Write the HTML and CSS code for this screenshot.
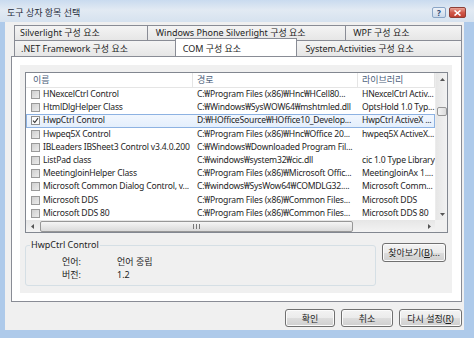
FILE: index.html
```html
<!DOCTYPE html>
<html>
<head>
    <title>도구 상자 항목 선택</title>
    <meta charset="utf-8">
    <link rel="stylesheet" href="styles.css">
</head>
<body>
<div class="window">
    <div class="titlebar">
        <span class="title">도구 상자 항목 선택</span>
        <div class="caption-btns">
            <span class="cap-btn help">?</span>
            <span class="cap-btn close">
                <svg width="7" height="6" viewBox="0 0 7 6"><path d="M0.5 0.5 L6.5 5.5 M6.5 0.5 L0.5 5.5" stroke="#fff" stroke-width="1.6"/></svg>
            </span>
        </div>
    </div>

    <div class="client">
        <div class="tab-row back">
            <div class="tab t-sl">Silverlight 구성 요소</div>
            <div class="tab t-wp">Windows Phone Silverlight 구성 요소</div>
            <div class="tab t-wpf">WPF 구성 요소</div>
        </div>
        <div class="tab-row front">
            <div class="tab t-net">.NET Framework 구성 요소</div>
            <div class="tab t-com active">COM 구성 요소</div>
            <div class="tab t-sys">System.Activities 구성 요소</div>
        </div>

        <div class="tab-page">
            <div class="page-inner">
                <div class="listview">
                    <div class="lv-main">
                        <div class="lv-content">
                            <div class="lv-header">
                                <div class="hcell first">이름</div>
                                <div class="hcell">경로</div>
                                <div class="hcell">라이브러리</div>
                            </div>
                            <div class="lv-row">
                                <div class="cell name"><span class="chk"></span>HNexcelCtrl Control</div>
                                <div class="cell">C:₩Program Files (x86)₩Hnc₩HCell80...</div>
                                <div class="cell">HNexcelCtrl Activ...</div>
                            </div>
                            <div class="lv-row">
                                <div class="cell name"><span class="chk"></span>HtmlDlgHelper Class</div>
                                <div class="cell">C:₩Windows₩SysWOW64₩mshtmled.dll</div>
                                <div class="cell">OptsHold 1.0 Typ...</div>
                            </div>
                            <div class="lv-row selected">
                                <div class="cell name"><span class="chk checked"><svg width="7" height="7" viewBox="0 0 7 7"><path d="M1 3.6 L2.8 5.5 L6 1.2" fill="none" stroke="#333" stroke-width="1.1"/></svg></span>HwpCtrl Control</div>
                                <div class="cell">D:₩HOfficeSource₩HOffice10_Develop...</div>
                                <div class="cell">HwpCtrl ActiveX ...</div>
                            </div>
                            <div class="lv-row">
                                <div class="cell name"><span class="chk"></span>Hwpeq5X Control</div>
                                <div class="cell">C:₩Program Files (x86)₩Hnc₩Office 20...</div>
                                <div class="cell">hwpeq5X ActiveX...</div>
                            </div>
                            <div class="lv-row">
                                <div class="cell name"><span class="chk"></span>IBLeaders IBSheet3 Control v3.4.0.200</div>
                                <div class="cell">C:₩Windows₩Downloaded Program Fil...</div>
                                <div class="cell"></div>
                            </div>
                            <div class="lv-row">
                                <div class="cell name"><span class="chk"></span>ListPad class</div>
                                <div class="cell">C:₩windows₩system32₩cic.dll</div>
                                <div class="cell">cic 1.0 Type Library</div>
                            </div>
                            <div class="lv-row">
                                <div class="cell name"><span class="chk"></span>MeetingJoinHelper Class</div>
                                <div class="cell">C:₩Program Files (x86)₩Microsoft Offic...</div>
                                <div class="cell">MeetingJoinAx 1....</div>
                            </div>
                            <div class="lv-row">
                                <div class="cell name"><span class="chk"></span>Microsoft Common Dialog Control, v...</div>
                                <div class="cell">C:₩windows₩SysWow64₩COMDLG32....</div>
                                <div class="cell">Microsoft Comm...</div>
                            </div>
                            <div class="lv-row">
                                <div class="cell name"><span class="chk"></span>Microsoft DDS</div>
                                <div class="cell">C:₩Program Files (x86)₩Common Files...</div>
                                <div class="cell">Microsoft DDS</div>
                            </div>
                            <div class="lv-row">
                                <div class="cell name"><span class="chk"></span>Microsoft DDS 80</div>
                                <div class="cell">C:₩Program Files (x86)₩Common Files...</div>
                                <div class="cell">Microsoft DDS 80</div>
                            </div>
                        </div>
                        <div class="vscroll">
                            <div class="sb-btn"><svg width="5" height="3" viewBox="0 0 5 3"><path d="M0 3 L2.5 0 L5 3 Z" fill="#555"/></svg></div>
                            <div class="vthumb"></div>
                            <div class="sb-fill"></div>
                            <div class="sb-btn"><svg width="5" height="3" viewBox="0 0 5 3"><path d="M0 0 L2.5 3 L5 0 Z" fill="#555"/></svg></div>
                        </div>
                    </div>
                    <div class="lv-bottom">
                        <div class="hscroll">
                            <div class="sb-btn"><svg width="3" height="5" viewBox="0 0 3 5"><path d="M3 0 L0 2.5 L3 5 Z" fill="#555"/></svg></div>
                            <div class="hthumb">
                                <svg width="7" height="5" viewBox="0 0 7 5"><path d="M0.5 0 V5 M3.5 0 V5 M6.5 0 V5" stroke="#777" stroke-width="1"/></svg>
                            </div>
                            <div class="sb-fill"></div>
                            <div class="sb-btn"><svg width="3" height="5" viewBox="0 0 3 5"><path d="M0 0 L3 2.5 L0 5 Z" fill="#555"/></svg></div>
                        </div>
                        <div class="sb-corner"></div>
                    </div>
                </div>

                <div class="details">
                    <fieldset class="groupbox">
                        <legend>HwpCtrl Control</legend>
                        <div class="info">
                            <span>언어:</span><span>언어 중립</span>
                            <span>버전:</span><span>1.2</span>
                        </div>
                    </fieldset>
                    <button class="btn browse">찾아보기(<u>B</u>)...</button>
                </div>
            </div>
        </div>

        <div class="footer">
            <button class="btn ok">확인</button>
            <button class="btn cancel">취소</button>
            <button class="btn reset">다시 설정(<u>R</u>)</button>
        </div>
    </div>
</div>
</body>
</html>
```

FILE: styles.css
```css
* {
    box-sizing: border-box;
}
body {
    margin: 0;
    font-family: "Noto Sans", "DejaVu Sans", "Noto Sans CJK KR", sans-serif;
    font-size: 9px;
    color: #1e1e1e;
}
.window {
    width: 474px;
    height: 338px;
    background: #aecaea;
    display: flex;
    flex-direction: column;
}
.titlebar {
    height: 22px;
    display: flex;
    align-items: flex-start;
    padding: 7px 8px 0 7px;
    background: linear-gradient(#c9dbef, #e2eaf3 45%, #d6e2ef);
}
.title {
    flex: 1;
    line-height: 12px;
    color: #1b2838;
}
.caption-btns {
    display: flex;
    gap: 3px;
}
.cap-btn {
    height: 11px;
    display: flex;
    align-items: center;
    justify-content: center;
    border-radius: 2px;
}
.cap-btn.help {
    width: 14px;
    border: 1px solid #8aa5c6;
    background: linear-gradient(#eef3f9, #cbd9ea);
    color: #29466e;
    font-size: 8px;
    font-weight: bold;
    line-height: 9px;
}
.cap-btn.close {
    width: 17px;
    border: 1px solid #8d3f37;
    background: linear-gradient(#eaa497, #d0584a 50%, #c13f31);
}

.client {
    height: 308px;
    margin: 0 10px 0 5px;
    padding: 3px 2px 0 6px;
    background: #f0f0f0;
    display: flex;
    flex-direction: column;
}
.tab-row {
    display: flex;
    margin-left: 3px;
}
.tab {
    border: 1px solid #898c95;
    border-bottom: none;
    background: linear-gradient(#f4f4f4, #e6e6e6);
    white-space: nowrap;
}
.tab + .tab {
    margin-left: -1px;
}
.back .tab {
    height: 15px;
    line-height: 14px;
}
.front .tab {
    height: 16px;
    line-height: 15px;
}
.t-sl { width: 134px; padding-left: 5px; }
.t-wp { width: 200px; padding-left: 8px; }
.t-wpf { width: 117px; padding-left: 7px; }
.t-net { width: 162px; padding-left: 6px; }
.t-com { width: 123px; padding-left: 7px; }
.t-sys { width: 166px; padding-left: 8px; }
.tab.active {
    position: relative;
    z-index: 1;
    background: #fff;
    height: 18px;
    margin-top: -2px;
    margin-bottom: -1px;
    line-height: 19px;
}

.tab-page {
    height: 246px;
    border: 1px solid #898c95;
    background: #fff;
    padding: 8px 9px 8px 8px;
    display: flex;
}
.page-inner {
    flex: 1;
    background: #f0f0f0;
    padding: 7px 4px 0 5px;
}

.listview {
    height: 161px;
    border: 1px solid #828790;
    background: #fff;
    display: flex;
    flex-direction: column;
}
.lv-main {
    flex: 1;
    display: flex;
    overflow: hidden;
}
.lv-content {
    flex: 1;
    overflow: hidden;
}
.lv-header,
.lv-row {
    display: grid;
    grid-template-columns: 167px 165px 77px;
}
.lv-header {
    height: 15px;
    line-height: 14px;
    border-bottom: 1px solid #e5e5e5;
    color: #4c607a;
}
.hcell {
    padding-left: 4px;
    border-right: 1px solid #e5e5e5;
}
.hcell.first {
    padding-left: 7px;
}
.lv-row {
    height: 13.2px;
    line-height: 13.2px;
}
.cell {
    padding-left: 4px;
    white-space: nowrap;
    overflow: hidden;
    font-size: 8.6px;
    letter-spacing: -0.2px;
}
.cell.name {
    display: flex;
    align-items: center;
    padding-left: 5px;
}
.lv-row.selected {
    background: linear-gradient(#f2f7fe, #e3eefc);
    box-shadow: inset 0 0 0 1px #8db2e2;
}
.chk {
    width: 9px;
    height: 9px;
    margin-right: 3px;
    border: 1px solid #9a9a9a;
    background: linear-gradient(135deg, #cfcfcf, #ececec);
    display: flex;
    align-items: center;
    justify-content: center;
    flex: none;
}
.chk.checked {
    border-color: #8e8f8f;
    background: #fbfbfb;
}

.vscroll {
    width: 12px;
    display: flex;
    flex-direction: column;
    background: linear-gradient(90deg, #e6e6e6, #f2f2f2);
    border-left: 1px solid #ececec;
}
.sb-btn {
    width: 12px;
    height: 12px;
    display: flex;
    align-items: center;
    justify-content: center;
    flex: none;
}
.sb-fill {
    flex: 1;
}
.vthumb {
    height: 9px;
    margin: 22px 0 0 1px;
    border: 1px solid #979797;
    border-radius: 2px;
    background: linear-gradient(90deg, #f4f4f4, #dcdcdc);
}
.lv-bottom {
    height: 12px;
    display: flex;
}
.hscroll {
    flex: 1;
    display: flex;
    align-items: center;
    background: linear-gradient(#e6e6e6, #f3f3f3);
}
.hthumb {
    width: 313px;
    height: 11px;
    margin-left: 2px;
    border: 1px solid #979797;
    border-radius: 2px;
    background: linear-gradient(#f5f5f5, #dadada);
    display: flex;
    align-items: center;
    justify-content: center;
}
.sb-corner {
    width: 12px;
    background: #f0f0f0;
}

.details {
    display: flex;
    align-items: flex-start;
    gap: 6px;
    margin-top: 6px;
}
.groupbox {
    width: 351px;
    margin: 0;
    padding: 4px;
    border: 1px solid #d5dfe5;
    border-radius: 3px;
    min-width: 0;
}
.groupbox legend {
    padding: 0 1px;
    line-height: 12px;
}
.info {
    display: grid;
    grid-template-columns: 55px auto;
    grid-auto-rows: 13px;
    line-height: 13px;
    margin-left: 32px;
}
.btn {
    font-family: inherit;
    font-size: 9px;
    color: #1e1e1e;
    height: 18px;
    padding: 0;
    border: 1px solid #707070;
    border-radius: 3px;
    background: linear-gradient(#f3f3f3, #ebebeb 50%, #dddddd 50%, #cfcfcf);
    box-shadow: inset 0 0 0 1px #fbfbfb;
}
.btn.browse {
    width: 64px;
    height: 19px;
    margin-top: 4px;
}
.footer {
    display: flex;
    justify-content: flex-end;
    gap: 6px;
    margin-top: 7px;
}
.btn.ok { width: 50px; }
.btn.cancel { width: 52px; }
.btn.reset { width: 63px; }
```
